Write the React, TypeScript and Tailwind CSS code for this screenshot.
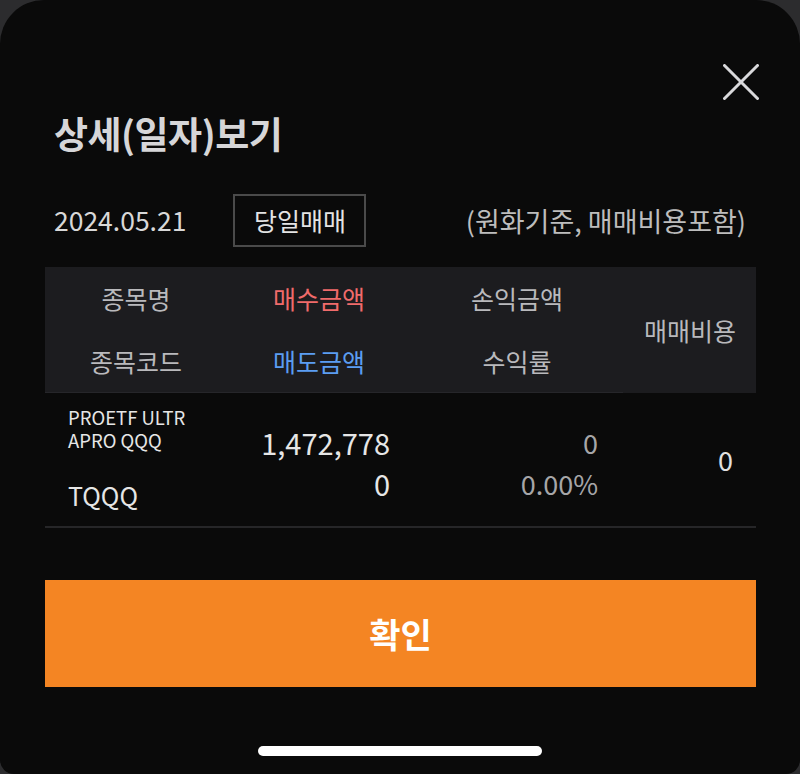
import React from "react";

const font = { fontFamily: '"Noto Sans CJK KR", "Noto Sans", sans-serif' };

export default function App() {
  return (
    <div className="w-[800px] h-[774px] bg-[#2c2c2e] overflow-hidden" style={font}>
      <div className="w-full h-[774px] bg-[#0a0a0a] rounded-t-[44px] rounded-b-[14px] flex flex-col">
        {/* close */}
        <div className="h-[100px] flex justify-end pt-[64px] pr-[41px]">
          <svg width="36" height="36" viewBox="0 0 36 36">
            <path d="M1.5 1.5 L34.5 34.5 M34.5 1.5 L1.5 34.5" stroke="#d9d9dc" strokeWidth="3" strokeLinecap="round" />
          </svg>
        </div>
        {/* title */}
        <div className="h-[66px] flex items-center pl-[54px]">
          <h1 className="text-[37px] font-bold text-[#d6d6d8] leading-none tracking-[-0.5px]">상세(일자)보기</h1>
        </div>
        {/* date row */}
        <div className="mt-[28px] h-[52px] flex items-center pl-[54px] pr-[54px]">
          <span className="text-[26.5px] text-[#d8d8d8] leading-none">2024.05.21</span>
          <div className="ml-[47px] w-[133px] h-[53px] border-2 border-[#4a4a4a] flex items-center justify-center">
            <span className="text-[25px] text-[#e4e4e4] leading-none">당일매매</span>
          </div>
          <span className="ml-auto text-[27px] text-[#bdbdbd] leading-none">(원화기준, 매매비용포함)</span>
        </div>
        {/* table */}
        <div className="ml-[45px] mr-[44px] mt-[21px]">
          <div className="grid grid-cols-[182px_184px_212px_133px] h-[126px] bg-[#1c1c1f] text-[25px] leading-none">
            <div className="flex flex-col border-b border-[#26262a]">
              <div className="h-[63px] flex items-center justify-center text-[#b9b9bc]">종목명</div>
              <div className="h-[62px] flex items-center justify-center text-[#b9b9bc]">종목코드</div>
            </div>
            <div className="flex flex-col border-b border-[#26262a]">
              <div className="h-[63px] flex items-center justify-center text-[#f06b6b]">매수금액</div>
              <div className="h-[62px] flex items-center justify-center text-[#5b9df2]">매도금액</div>
            </div>
            <div className="flex flex-col border-b border-[#26262a]">
              <div className="h-[63px] flex items-center justify-center text-[#b9b9bc]">손익금액</div>
              <div className="h-[62px] flex items-center justify-center text-[#b9b9bc]">수익률</div>
            </div>
            <div className="flex items-center justify-center text-[#b9b9bc] pl-[1px]">매매비용</div>
          </div>
          <div className="grid grid-cols-[182px_184px_212px_133px] h-[135px] border-b-2 border-[#262628]">
            <div className="flex flex-col pl-[23px] pt-[13px]">
              <div className="h-[23px] flex items-center text-[18.5px] leading-none text-[#e6e6e6]">PROETF ULTR</div>
              <div className="h-[23px] flex items-center text-[18.5px] leading-none text-[#e6e6e6]">APRO QQQ</div>
              <div className="mt-[28px] h-[30px] flex items-center text-[25px] text-[#e6e6e6] leading-none">TQQQ</div>
            </div>
            <div className="flex flex-col pt-[29px] pr-[21px] text-[29px] text-[#e6e6e6] leading-none">
              <div className="h-[41px] flex items-center justify-end">1,472,778</div>
              <div className="h-[41px] flex items-center justify-end">0</div>
            </div>
            <div className="flex flex-col pt-[29px] pr-[25px] text-[27px] text-[#a6a6a8] leading-none">
              <div className="h-[41px] flex items-center justify-end">0</div>
              <div className="h-[41px] flex items-center justify-end">0.00%</div>
            </div>
            <div className="flex items-center justify-end pr-[23px] text-[27px] text-[#e0e0e0] leading-none">0</div>
          </div>
        </div>
        {/* confirm */}
        <div className="ml-[45px] mr-[44px] mt-[52px] h-[107px] bg-[#f48523] flex items-center justify-center">
          <span className="text-[34px] font-semibold text-white leading-none">확인</span>
        </div>
        <div className="mt-[59px] w-[284px] h-[10px] rounded-full bg-white mx-auto" />
      </div>
    </div>
  );
}
